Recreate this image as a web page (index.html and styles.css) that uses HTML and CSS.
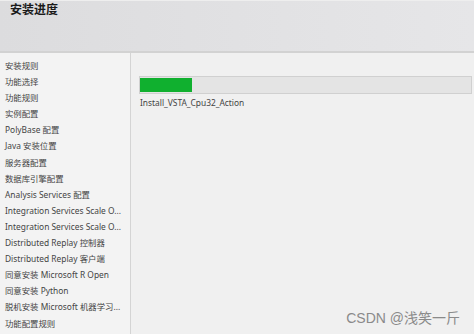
FILE: index.html
```html
<!DOCTYPE html>
<html lang="zh">
<head>
<meta charset="utf-8">
<link rel="stylesheet" href="styles.css">
</head>
<body>
<div class="window">
  <header class="header">
    <h1 class="title">安装进度</h1>
  </header>
  <div class="main">
    <nav class="sidebar">
      <div class="item">安装规则</div>
      <div class="item">功能选择</div>
      <div class="item">功能规则</div>
      <div class="item">实例配置</div>
      <div class="item">PolyBase 配置</div>
      <div class="item">Java 安装位置</div>
      <div class="item">服务器配置</div>
      <div class="item">数据库引擎配置</div>
      <div class="item">Analysis Services 配置</div>
      <div class="item">Integration Services Scale O...</div>
      <div class="item">Integration Services Scale O...</div>
      <div class="item">Distributed Replay 控制器</div>
      <div class="item">Distributed Replay 客户端</div>
      <div class="item">同意安装 Microsoft R Open</div>
      <div class="item">同意安装 Python</div>
      <div class="item">脱机安装 Microsoft 机器学习...</div>
      <div class="item">功能配置规则</div>
    </nav>
    <section class="content">
      <div class="progress"><div class="fill" style="width:52px"></div></div>
      <div class="status">Install_VSTA_Cpu32_Action</div>
    </section>
  </div>
  <div class="watermark">CSDN @浅笑一斤</div>
</div>
</body>
</html>
```
FILE: styles.css
```css
html, body {
  margin: 0;
  padding: 0;
}
body {
  width: 474px;
  height: 334px;
  overflow: hidden;
  background: #f0f0f0;
  font-family: "Noto Sans", "Noto Sans CJK SC", sans-serif;
}
.window {
  position: relative;
  width: 474px;
  height: 334px;
  display: flex;
  flex-direction: column;
}
.header {
  flex: none;
  background: linear-gradient(to right, #dcdcde, #e6e6e8);
  border-top: 1px solid #eeeeee;
  border-bottom: 2px solid #d2d2d2;
  box-sizing: border-box;
  height: 53px;
}
.title {
  margin: 0;
  padding: 1px 0 0 10px;
  font-size: 12px;
  line-height: 14px;
  font-weight: bold;
  color: #1a1a1a;
  font-family: "Noto Sans CJK SC", sans-serif;
}
.main {
  flex: 1;
  display: flex;
}
.sidebar {
  width: 131px;
  flex: none;
  border-right: 1px solid #d4d4d4;
  background: #f3f3f3;
  padding-top: 5px;
  box-sizing: border-box;
}
.item {
  height: 16.1px;
  line-height: 16px;
  padding-left: 5px;
  font-size: 8.4px;
  color: #444444;
  white-space: nowrap;
  overflow: hidden;
}
.content {
  flex: 1;
  padding: 23px 2px 0 8px;
}
.progress {
  height: 18px;
  box-sizing: border-box;
  border: 1px solid #d0d0d0;
  background: #e4e4e4;
  padding: 1px 1px 1px 0;
}
.fill {
  height: 100%;
  background: #10b02f;
}
.status {
  margin-top: 3px;
  padding-left: 1px;
  font-size: 8.4px;
  line-height: 12px;
  color: #444444;
}
.watermark {
  position: absolute;
  right: 14px;
  bottom: 8px;
  font-size: 14px;
  line-height: 16px;
  color: #8a8a8a;
  font-family: "Liberation Sans", "Noto Sans CJK SC", sans-serif;
}
```
